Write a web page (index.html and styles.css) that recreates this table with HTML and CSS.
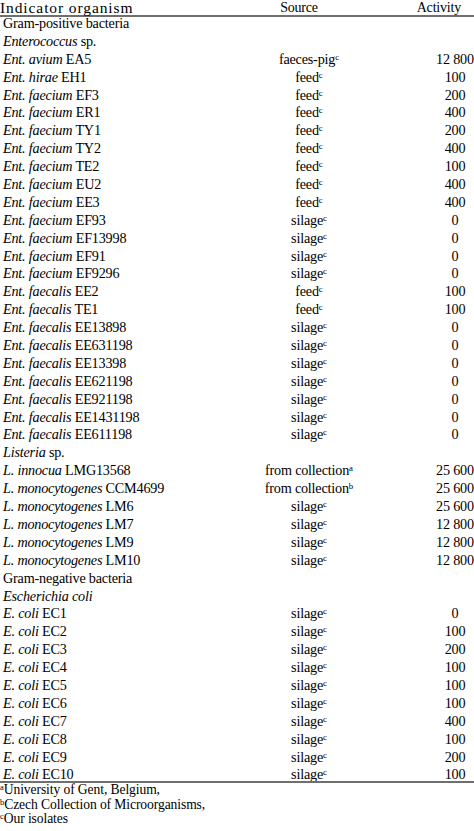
FILE: index.html
```html
<!DOCTYPE html>
<html>
<head>
<meta charset="utf-8">
<link rel="stylesheet" href="styles.css">
</head>
<body>
<div class="table">
  <div class="head">
    <div class="h1">Indicator organism</div>
    <div class="h2">Source</div>
    <div class="h3">Activity</div>
  </div>
  <div class="body">
    <div class="row"><div class="c1">Gram-positive bacteria</div><div class="c2"></div><div class="c3"></div></div>
    <div class="row"><div class="c1"><i>Enterococcus</i> sp.</div><div class="c2"></div><div class="c3"></div></div>
    <div class="row"><div class="c1"><i>Ent. avium</i> EA5</div><div class="c2">faeces-pig<sup>c</sup></div><div class="c3">12 800</div></div>
    <div class="row"><div class="c1"><i>Ent. hirae</i> EH1</div><div class="c2">feed<sup>c</sup></div><div class="c3">100</div></div>
    <div class="row"><div class="c1"><i>Ent. faecium</i> EF3</div><div class="c2">feed<sup>c</sup></div><div class="c3">200</div></div>
    <div class="row"><div class="c1"><i>Ent. faecium</i> ER1</div><div class="c2">feed<sup>c</sup></div><div class="c3">400</div></div>
    <div class="row"><div class="c1"><i>Ent. faecium</i> TY1</div><div class="c2">feed<sup>c</sup></div><div class="c3">200</div></div>
    <div class="row"><div class="c1"><i>Ent. faecium</i> TY2</div><div class="c2">feed<sup>c</sup></div><div class="c3">400</div></div>
    <div class="row"><div class="c1"><i>Ent. faecium</i> TE2</div><div class="c2">feed<sup>c</sup></div><div class="c3">100</div></div>
    <div class="row"><div class="c1"><i>Ent. faecium</i> EU2</div><div class="c2">feed<sup>c</sup></div><div class="c3">400</div></div>
    <div class="row"><div class="c1"><i>Ent. faecium</i> EE3</div><div class="c2">feed<sup>c</sup></div><div class="c3">400</div></div>
    <div class="row"><div class="c1"><i>Ent. faecium</i> EF93</div><div class="c2">silage<sup>c</sup></div><div class="c3">0</div></div>
    <div class="row"><div class="c1"><i>Ent. faecium</i> EF13998</div><div class="c2">silage<sup>c</sup></div><div class="c3">0</div></div>
    <div class="row"><div class="c1"><i>Ent. faecium</i> EF91</div><div class="c2">silage<sup>c</sup></div><div class="c3">0</div></div>
    <div class="row"><div class="c1"><i>Ent. faecium</i> EF9296</div><div class="c2">silage<sup>c</sup></div><div class="c3">0</div></div>
    <div class="row"><div class="c1"><i>Ent. faecalis</i> EE2</div><div class="c2">feed<sup>c</sup></div><div class="c3">100</div></div>
    <div class="row"><div class="c1"><i>Ent. faecalis</i> TE1</div><div class="c2">feed<sup>c</sup></div><div class="c3">100</div></div>
    <div class="row"><div class="c1"><i>Ent. faecalis</i> EE13898</div><div class="c2">silage<sup>c</sup></div><div class="c3">0</div></div>
    <div class="row"><div class="c1"><i>Ent. faecalis</i> EE631198</div><div class="c2">silage<sup>c</sup></div><div class="c3">0</div></div>
    <div class="row"><div class="c1"><i>Ent. faecalis</i> EE13398</div><div class="c2">silage<sup>c</sup></div><div class="c3">0</div></div>
    <div class="row"><div class="c1"><i>Ent. faecalis</i> EE621198</div><div class="c2">silage<sup>c</sup></div><div class="c3">0</div></div>
    <div class="row"><div class="c1"><i>Ent. faecalis</i> EE921198</div><div class="c2">silage<sup>c</sup></div><div class="c3">0</div></div>
    <div class="row"><div class="c1"><i>Ent. faecalis</i> EE1431198</div><div class="c2">silage<sup>c</sup></div><div class="c3">0</div></div>
    <div class="row"><div class="c1"><i>Ent. faecalis</i> EE611198</div><div class="c2">silage<sup>c</sup></div><div class="c3">0</div></div>
    <div class="row"><div class="c1"><i>Listeria</i> sp.</div><div class="c2"></div><div class="c3"></div></div>
    <div class="row"><div class="c1"><i>L. innocua</i> LMG13568</div><div class="c2">from collection<sup>a</sup></div><div class="c3">25 600</div></div>
    <div class="row"><div class="c1"><i>L. monocytogenes</i> CCM4699</div><div class="c2">from collection<sup>b</sup></div><div class="c3">25 600</div></div>
    <div class="row"><div class="c1"><i>L. monocytogenes</i> LM6</div><div class="c2">silage<sup>c</sup></div><div class="c3">25 600</div></div>
    <div class="row"><div class="c1"><i>L. monocytogenes</i> LM7</div><div class="c2">silage<sup>c</sup></div><div class="c3">12 800</div></div>
    <div class="row"><div class="c1"><i>L. monocytogenes</i> LM9</div><div class="c2">silage<sup>c</sup></div><div class="c3">12 800</div></div>
    <div class="row"><div class="c1"><i>L. monocytogenes</i> LM10</div><div class="c2">silage<sup>c</sup></div><div class="c3">12 800</div></div>
    <div class="row"><div class="c1">Gram-negative bacteria</div><div class="c2"></div><div class="c3"></div></div>
    <div class="row"><div class="c1"><i>Escherichia coli</i></div><div class="c2"></div><div class="c3"></div></div>
    <div class="row"><div class="c1"><i>E. coli</i> EC1</div><div class="c2">silage<sup>c</sup></div><div class="c3">0</div></div>
    <div class="row"><div class="c1"><i>E. coli</i> EC2</div><div class="c2">silage<sup>c</sup></div><div class="c3">100</div></div>
    <div class="row"><div class="c1"><i>E. coli</i> EC3</div><div class="c2">silage<sup>c</sup></div><div class="c3">200</div></div>
    <div class="row"><div class="c1"><i>E. coli</i> EC4</div><div class="c2">silage<sup>c</sup></div><div class="c3">100</div></div>
    <div class="row"><div class="c1"><i>E. coli</i> EC5</div><div class="c2">silage<sup>c</sup></div><div class="c3">100</div></div>
    <div class="row"><div class="c1"><i>E. coli</i> EC6</div><div class="c2">silage<sup>c</sup></div><div class="c3">100</div></div>
    <div class="row"><div class="c1"><i>E. coli</i> EC7</div><div class="c2">silage<sup>c</sup></div><div class="c3">400</div></div>
    <div class="row"><div class="c1"><i>E. coli</i> EC8</div><div class="c2">silage<sup>c</sup></div><div class="c3">100</div></div>
    <div class="row"><div class="c1"><i>E. coli</i> EC9</div><div class="c2">silage<sup>c</sup></div><div class="c3">200</div></div>
    <div class="row"><div class="c1"><i>E. coli</i> EC10</div><div class="c2">silage<sup>c</sup></div><div class="c3">100</div></div>
  </div>
  <div class="notes">
    <div class="note"><sup>a</sup>University of Gent, Belgium,</div>
    <div class="note"><sup>b</sup>Czech Collection of Microorganisms,</div>
    <div class="note"><sup>c</sup>Our isolates</div>
  </div>
</div>
</body>
</html>
```

FILE: styles.css
```css
html, body {
  margin: 0;
  padding: 0;
  background: #ffffff;
}

body {
  width: 474px;
  height: 831px;
  overflow: hidden;
  font-family: "Liberation Serif", "Times New Roman", serif;
  color: #000000;
}

.table {
  display: flex;
  flex-direction: column;
}

.head {
  display: grid;
  grid-template-columns: 250px 118px 106px;
  height: 15px;
  line-height: 15px;
  font-size: 14px;
  letter-spacing: -0.2px;
  border-bottom: 2px solid #6f6f6f;
}

.h1 {
  font-size: 15.5px;
  letter-spacing: 0.9px;
  white-space: nowrap;
}

.h2 {
  text-align: center;
  padding-right: 20px;
}

.h3 {
  text-align: right;
  padding-right: 13px;
}

.body {
  margin-top: -2px;
  display: flex;
  flex-direction: column;
}

.row {
  display: grid;
  grid-template-columns: 250px 118px 106px;
  height: 17.9px;
  line-height: 17.9px;
  font-size: 14.2px;
  letter-spacing: -0.2px;
  white-space: nowrap;
}

.c1 {
  padding-left: 3px;
}

.c2 {
  text-align: center;
}

.c3 {
  text-align: center;
  padding-left: 68px;
}

sup {
  font-size: 0.62em;
  line-height: 0;
  vertical-align: 0.5em;
  letter-spacing: 0;
}

.notes {
  margin-top: -3px;
  border-top: 2px solid #6f6f6f;
  display: flex;
  flex-direction: column;
}

.note {
  font-size: 13.6px;
  letter-spacing: -0.1px;
  line-height: 14.5px;
  height: 14.5px;
  white-space: nowrap;
}
```
